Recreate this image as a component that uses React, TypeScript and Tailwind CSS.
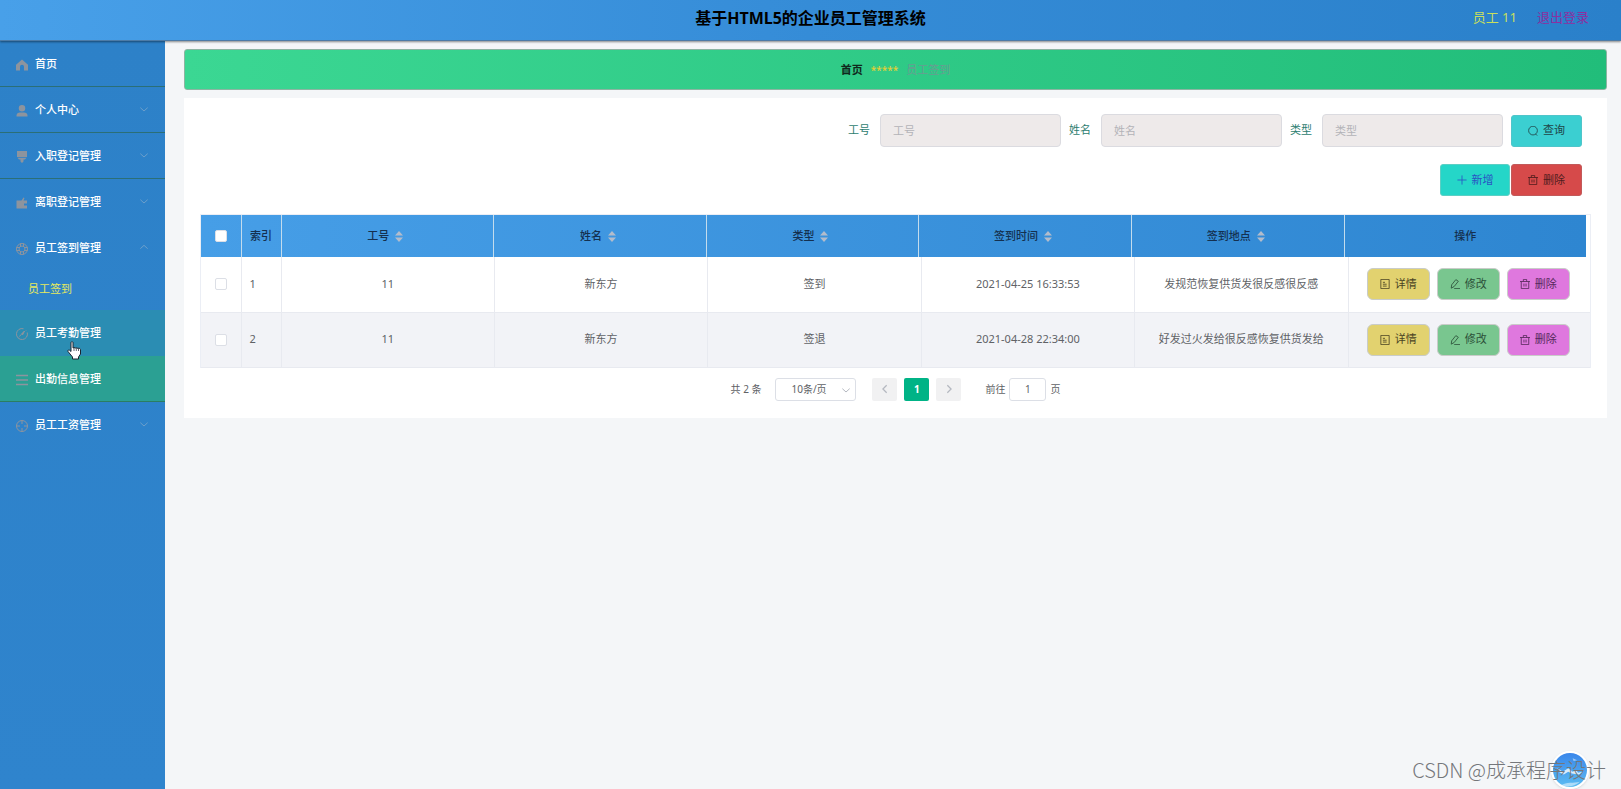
import React, { useState, type FormEvent } from "react";
import clsx from "clsx";

interface MenuItem {
  label: string;
  icon: React.ReactNode;
  arrow?: "up" | "down";
  children?: string[];
  className?: string;
}

interface SignRecord {
  id: number;
  jobNo: string;
  name: string;
  type: string;
  time: string;
  place: string;
}

const records: SignRecord[] = [
  { id: 1, jobNo: "11", name: "新东方", type: "签到", time: "2021-04-25 16:33:53", place: "发规范恢复供货发很反感很反感" },
  { id: 2, jobNo: "11", name: "新东方", type: "签退", time: "2021-04-28 22:34:00", place: "好发过火发给很反感恢复供货发给" },
];

const searchFields = ["工号", "姓名", "类型"];
const columns = ["工号", "姓名", "类型", "签到时间", "签到地点"];

const Icon = ({ children, className = "size-2.5 stroke-2" }: { children: React.ReactNode; className?: string }) => (
  <svg viewBox="0 0 24 24" fill="none" stroke="currentColor" className={clsx("shrink-0", className)} aria-hidden="true">
    {children}
  </svg>
);

const ChevronIcon = ({ dir, className }: { dir: "up" | "down" | "left" | "right"; className?: string }) => {
  const paths = {
    up: "M1 17l11-10 11 10",
    down: "M1 8l11 10 11-10",
    left: "M16 3l-9 9 9 9",
    right: "M8 3l9 9-9 9",
  };
  return (
    <Icon className={clsx("stroke-3", className)}>
      <path d={paths[dir]} />
    </Icon>
  );
};

const TrashIcon = () => (
  <Icon>
    <path d="M0 6h24M3 6v17h18V6M8 6V1h8v5M9.500 11v7M14.500 11v7" />
  </Icon>
);

const DetailIcon = () => (
  <Icon>
    <path d="M2 1h20v22H2zM7 8h5M7 12.500h9M7 17h9" />
  </Icon>
);

const EditIcon = () => (
  <Icon>
    <path d="M3 22l1-8L14 1.500l6 4L10 18zM10 23h14" />
  </Icon>
);

const menu: MenuItem[] = [
  {
    label: "首页",
    icon: <path fill="currentColor" stroke="none" d="M12 1l12 10.500V23h-8v-7.500a4 4 0 0 0-8 0V23H0V11.500z" />,
  },
  {
    label: "个人中心",
    arrow: "down",
    icon: <path fill="currentColor" stroke="none" d="M12 0a6.500 6.500 0 1 1 0 13 6.500 6.500 0 0 1 0-13zM1 23v-2c0-4 3-6 7-6h8c4 0 7 2 7 6v2z" />,
  },
  {
    label: "入职登记管理",
    arrow: "down",
    icon: <path fill="currentColor" stroke="none" d="M2 0h20v12H2zM3 13.500h18L18 17h-3v4l-3 3-3-3v-4H6z" />,
  },
  {
    label: "离职登记管理",
    arrow: "down",
    icon: <path fill="currentColor" stroke="none" d="M1 7h10l4-6 2 1-2 5h7v6h-6v4h6v6H1z" />,
  },
  {
    label: "员工签到管理",
    arrow: "up",
    children: ["员工签到"],
    icon: (
      <>
        <circle cx="12" cy="12" r="11" />
        <circle cx="12" cy="12" r="6" />
        <path d="M9 1v5M15 1v5M9 18v5M15 18v5M1 9h5M1 15h5M18 9h5M18 15h5" />
      </>
    ),
  },
  {
    label: "员工考勤管理",
    className: "bg-[#2b8db3]",
    icon: (
      <>
        <path d="M15 1.500A11 11 0 1 0 22.500 9M19 4l1 1" />
        <path d="M17 6l-4 8-2-2zM10 13l-3 4" fill="currentColor" />
      </>
    ),
  },
  {
    label: "出勤信息管理",
    className: "bg-[#2ba093] border-[#2b7d62]",
    icon: <path d="M0 3h24M0 12h24M0 21h24" strokeWidth="3" />,
  },
  {
    label: "员工工资管理",
    arrow: "down",
    icon: (
      <>
        <circle cx="12" cy="12" r="11" />
        <path d="M12 1v7M12 16v7M1 12h7M16 12h7" />
      </>
    ),
  },
];

const Sidebar = () => (
  <aside className="relative w-[165px] shrink-0 bg-linear-to-b from-[#2d81c8] to-[#2f84cd]">
    <nav>
      <ul>
        {menu.map(({ label, icon, arrow, children, className }, i) => (
          <li key={label}>
            <a
              href="#"
              className={clsx(
                "flex h-[46px] items-center border-b pt-0.5 pr-[17px] pl-4 text-[11px] text-white",
                i < 3 ? "border-[#2b6f76]" : !className?.includes("border") && "border-transparent",
                className
              )}
            >
              <Icon className="size-3 stroke-2 text-[#8d949e]">{icon}</Icon>
              <span className="ml-[7px] flex-1 font-medium">{label}</span>
              {arrow && <ChevronIcon dir={arrow} className="mb-1 size-2 text-[#6c9fcb]" />}
            </a>
            {children?.map((child) => (
              <a key={child} href="#" className="flex h-[39px] items-center pb-0.5 pl-7 text-[11px] text-[#e6ea5c]">
                {child}
              </a>
            ))}
          </li>
        ))}
      </ul>
    </nav>

    {/* Pointer over the hovered item */}
    <svg viewBox="0 0 15 19" className="absolute top-[300px] left-[67px] h-[19px] w-[15px]" aria-hidden="true">
      <path
        d="M4 1.500c0-1 2-1 2 0V7l1-.5 1.500.5 1-.2 1.500.6 1-.2c1 .2 1.500.8 1.500 1.800V13l-2 3v2H5.500v-2L1 10.500c-.5-1.200.8-2 1.700-1.200L4 10.500z"
        fill="#fff"
        stroke="#1c2430"
      />
      <path d="M7 7v3M9.300 7v3M11.500 8v2" stroke="#1c2430" strokeWidth="0.700" />
    </svg>
  </aside>
);

const SearchForm = () => {
  const [query, setQuery] = useState<Record<string, string>>({});
  const handleSubmit = (e: FormEvent) => e.preventDefault();

  return (
    <form onSubmit={handleSubmit} className="flex flex-wrap items-center justify-end gap-2 pr-[9px]">
      {searchFields.map((field) => (
        <label key={field} className="flex items-center gap-2.5 text-[11px] text-[#2d7d70]">
          {field}
          <input
            type="text"
            placeholder={field}
            value={query[field] ?? ""}
            onChange={(e) => setQuery({ ...query, [field]: e.target.value })}
            className="h-[33px] w-[181px] rounded border border-[#dbdbe0] bg-[#eeeaea] px-3 text-[11px] text-gray-700 placeholder:text-[#b3b3b8]"
          />
        </label>
      ))}
      <button type="submit" className="flex h-8 w-[71px] items-center justify-center gap-[5px] rounded-[3px] border border-[#4fc5ca] bg-[#3bcfd1] text-[11px] text-[#204447]">
        <Icon>
          <circle cx="12" cy="11" r="10.500" />
          <path d="M18 19l4 4" />
        </Icon>
        查询
      </button>
    </form>
  );
};

const SortCaret = () => (
  <svg viewBox="0 0 8 11" className="mr-1 h-[11px] w-2" fill="#b3bccb" aria-hidden="true">
    <path d="M4 0l4 4.500H0zM4 11l4-4.500H0z" />
  </svg>
);

const ColumnWidths = () => (
  <colgroup>
    <col className="w-10" />
    <col className="w-10" />
    {columns.map((c) => (
      <col key={c} />
    ))}
    <col className="w-[242px]" />
  </colgroup>
);

const actionClass = "flex h-8 w-[63px] items-center justify-center gap-[5px] rounded-md border border-[#c9ccc9] text-[11px]";
const checkClass = "block size-3 appearance-none rounded-xs border border-[#dcdfe6] bg-white checked:bg-[#00b386]";

const RecordTable = () => {
  const [selected, setSelected] = useState<number[]>([]);
  const toggle = (id: number) =>
    setSelected((prev) => (prev.includes(id) ? prev.filter((s) => s !== id) : [...prev, id]));

  return (
    <div className="border-t border-r border-l border-[#ebeef5]">
      <div className="pr-1">
        <table className="w-full table-fixed border-collapse bg-linear-to-r from-[#469ee7] to-[#2e86d1] text-[11px] text-[#14304f]">
          <ColumnWidths />
          <thead>
            <tr className="h-[42px] *:border-r *:border-[#c3dced] *:font-medium *:last:border-r-0">
              <th>
                <input
                  type="checkbox"
                  aria-label="全选"
                  checked={selected.length === records.length}
                  onChange={() => setSelected(selected.length === records.length ? [] : records.map((r) => r.id))}
                  className={clsx(checkClass, "mx-auto")}
                />
              </th>
              <th>索引</th>
              {columns.map((c) => (
                <th key={c}>
                  <span className="inline-flex items-center gap-1.5">
                    {c}
                    <SortCaret />
                  </span>
                </th>
              ))}
              <th>操作</th>
            </tr>
          </thead>
        </table>
      </div>
      <table className="w-full table-fixed border-collapse text-center text-[11px] text-[#606266]">
        <ColumnWidths />
        <tbody>
          {records.map((r) => (
            <tr key={r.id} className="h-[55px] border-b border-[#e8eaf0] even:bg-[#f2f3f7] *:border-r *:border-[#e8eaf0] *:last:border-r-0">
              <td>
                <input
                  type="checkbox"
                  aria-label={`选择 ${r.id}`}
                  checked={selected.includes(r.id)}
                  onChange={() => toggle(r.id)}
                  className={clsx(checkClass, "mx-auto")}
                />
              </td>
              <td className="pl-2 text-left">{r.id}</td>
              <td>{r.jobNo}</td>
              <td>{r.name}</td>
              <td>{r.type}</td>
              <td>{r.time}</td>
              <td>{r.place}</td>
              <td>
                <div className="flex justify-center gap-[7px] pr-0.5">
                  <button className={clsx(actionClass, "bg-[#e2d26f] text-[#4a4424]")}>
                    <DetailIcon />
                    详情
                  </button>
                  <button className={clsx(actionClass, "bg-[#79c68f] text-[#2b4f38]")}>
                    <EditIcon />
                    修改
                  </button>
                  <button className={clsx(actionClass, "bg-[#df78de] text-[#55295a]")}>
                    <TrashIcon />
                    删除
                  </button>
                </div>
              </td>
            </tr>
          ))}
        </tbody>
      </table>
    </div>
  );
};

const Pagination = () => {
  const [page, setPage] = useState("1");
  const pagerClass = "flex h-[23px] w-[25px] items-center justify-center rounded-xs";

  return (
    <div className="flex items-center justify-center pt-2.5 text-[10px] text-[#606266]">
      <span>共 2 条</span>
      <div className="relative ml-3.5">
        <select aria-label="每页条数" className="h-[23px] w-[81px] appearance-none rounded-[3px] border border-[#dcdfe6] bg-white pl-[15px] text-[10px]">
          <option>10条/页</option>
        </select>
        <ChevronIcon dir="down" className="pointer-events-none absolute top-2 right-1.5 size-2 text-[#b4b8c0]" />
      </div>
      <div className="ml-4 flex gap-[7px]">
        <button aria-label="上一页" className={clsx(pagerClass, "bg-[#f1f1f2] text-[#b4b8c0]")}>
          <ChevronIcon dir="left" className="size-2.5" />
        </button>
        <button className={clsx(pagerClass, "bg-[#00b386] font-bold text-white")}>1</button>
        <button aria-label="下一页" className={clsx(pagerClass, "bg-[#f1f1f2] text-[#b4b8c0]")}>
          <ChevronIcon dir="right" className="size-2.5" />
        </button>
      </div>
      <label className="ml-6 flex items-center gap-1">
        前往
        <input
          type="text"
          value={page}
          onChange={(e) => setPage(e.target.value)}
          className="h-[23px] w-[37px] rounded-[3px] border border-[#dcdfe6] text-center text-[10px]"
        />
        页
      </label>
    </div>
  );
};

const App: React.FC = () => {
  return (
    <div className="relative flex min-h-screen flex-col overflow-hidden bg-[#f4f6f8] font-['Noto_Sans','Noto_Sans_CJK_SC',sans-serif]">
      <header className="relative z-10 flex h-[41px] items-center border-b border-[#4d7ba6] bg-linear-to-r from-[#48a0e9] via-[#358cd7] to-[#2a80ca] px-8 pb-1 shadow-[0_1px_2px_rgba(0,0,0,0.45)]">
        <div className="flex-1" />
        <h1 className="text-base font-bold text-black">基于HTML5的企业员工管理系统</h1>
        <div className="flex flex-1 justify-end gap-5 text-[13px]">
          <span className="text-[#c9df5c]">员工 11</span>
          <a href="#" className="text-[#8d2fa0]">退出登录</a>
        </div>
      </header>

      <div className="flex flex-1">
        <Sidebar />
        <main className="flex-1 pt-2 pr-[14px] pl-[19px]">
          {/* Breadcrumb */}
          <div className="flex h-[41px] items-center justify-center gap-2 rounded-[3px] border border-[#8cb5a2] bg-linear-to-r from-[#3bd793] to-[#21bd7a] pt-0.5 text-[11px]">
            <a href="#" className="font-bold text-[#10281c]">首页</a>
            <span className="text-[10px] font-medium text-[#e6cf35]">*****</span>
            <span className="text-[#6a9c92]">员工签到</span>
          </div>

          <section className="mt-2 bg-white px-4 pt-4 pb-[17px]">
            <SearchForm />
            <div className="flex justify-end gap-px pt-[17px] pr-[9px] pb-[18px] text-[11px]">
              <button className="flex h-8 w-[70px] items-center justify-center gap-[5px] rounded-[3px] border border-[#5ccfc4] bg-[#25d6c8] text-[#2a52c4]">
                <Icon>
                  <path d="M12 1v22M1 12h22" />
                </Icon>
                新增
              </button>
              <button className="flex h-8 w-[71px] items-center justify-center gap-[5px] rounded-[3px] border border-[#c25a5a] bg-[#d64a4a] text-[#4f1d1d]">
                <TrashIcon />
                删除
              </button>
            </div>
            <RecordTable />
            <Pagination />
          </section>
        </main>
      </div>

      {/* Floating helper and watermark */}
      <div className="absolute right-8 bottom-0 size-[38px] rounded-full border-2 border-white bg-linear-to-b from-[#3a86ea] to-[#5cbcf2] shadow">
        <svg viewBox="0 0 38 38" className="size-full" fill="#fff" aria-hidden="true">
          <path d="M5 17l6 4 6-4 5 4 4-2 2 3 5-1-4 3-8-1-4-2-5 3-6-3z" opacity="0.800" />
          <path d="M22 6l5 2-4 1zM9 36c6-4 14-2 21-4-5 5-14 7-21 4z" opacity="0.500" />
        </svg>
      </div>
      <p className="absolute right-[15px] bottom-[5px] font-['Noto_Sans_CJK_SC',sans-serif] text-xl leading-7 font-light text-[#74777b]">
        CSDN @成承程序设计
      </p>
    </div>
  );
};

export default App;
